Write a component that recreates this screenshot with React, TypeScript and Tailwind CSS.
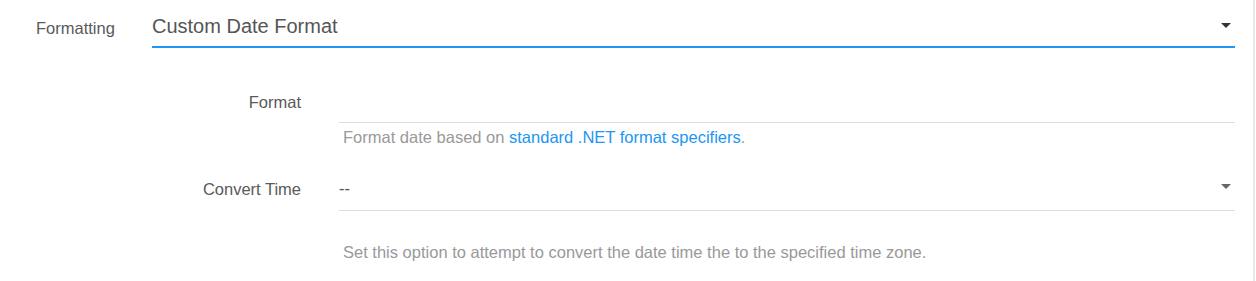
const Caret = ({ color }: { color: string }) => (
  <svg width="10" height="5" viewBox="0 0 10 5" className="block">
    <path d="M0 0 L10 0 L5 5 Z" fill={color} />
  </svg>
);

export default function App() {
  return (
    <div
      className="w-[1255px] h-[281px] bg-white border-r-2 border-[#e8e8e8] text-[16.5px] leading-[20px]"
      style={{ fontFamily: '"Liberation Sans", Arial, sans-serif' }}
    >
      {/* Formatting select */}
      <div className="flex h-[48px]">
        <div className="w-[152px] pl-[36px] pt-[18px] text-[#5a5a5a]">Formatting</div>
        <div className="flex-1 mr-[18px] border-b-2 border-[#2196f3] pt-[6px] flex items-center justify-between">
          <span className="text-[20px] leading-[24px] text-[#555]">Custom Date Format</span>
          <span className="pr-[4px] -mt-[2px]">
            <Caret color="#333" />
          </span>
        </div>
      </div>

      {/* Format */}
      <div className="flex mt-[33px] h-[42px]">
        <div className="w-[301px] flex items-center justify-end text-[#5a5a5a]">Format</div>
        <div className="flex-1 ml-[38px] mr-[18px] border-b border-[#dddddd]" />
      </div>
      <div className="mt-[4px] pl-[343px] text-[#999]">
        Format date based on <span className="text-[#2196f3]">standard .NET format specifiers</span>.
      </div>

      {/* Convert Time */}
      <div className="flex mt-[22px] h-[42px]">
        <div className="w-[301px] flex items-center justify-end pb-[3px] text-[#5a5a5a]">Convert Time</div>
        <div className="flex-1 ml-[38px] mr-[18px] border-b border-[#dddddd] flex items-center justify-between pb-[3px]">
          <span className="text-[#555]">--</span>
          <span className="pr-[4px] -mt-[3px]">
            <Caret color="#666" />
          </span>
        </div>
      </div>
      <div className="mt-[31px] pl-[343px] text-[#999]">
        Set this option to attempt to convert the date time the to the specified time zone.
      </div>
    </div>
  );
}
